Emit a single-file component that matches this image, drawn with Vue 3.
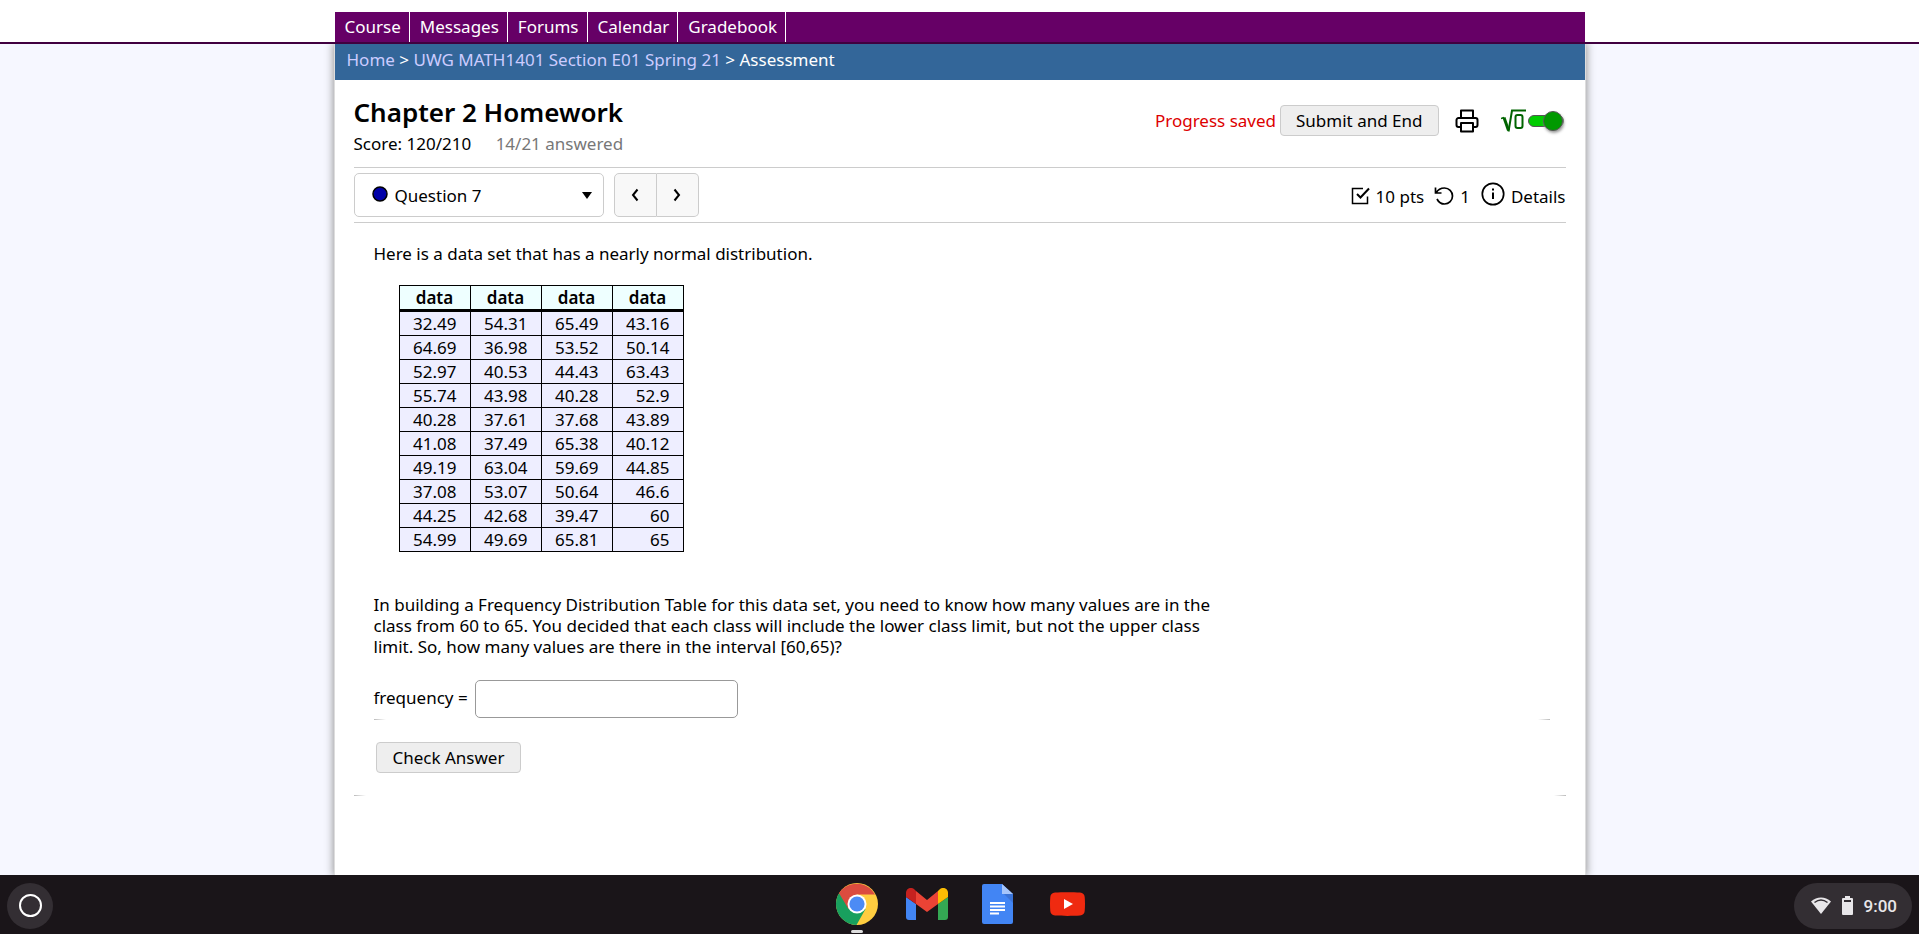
<template>
  <div class="screen">
    <header class="topbar">
      <nav class="nav">
        <a v-for="item in navItems" :key="item" href="#">{{ item }}</a>
      </nav>
    </header>

    <main class="wrapper">
      <div class="breadcrumb">
        <a href="#">Home</a> &gt; <a href="#">UWG MATH1401 Section E01 Spring 21</a> &gt; Assessment
      </div>

      <div class="content">
        <div class="assess-header">
          <div class="heading">
            <h1>Chapter 2 Homework</h1>
            <p>Score: 120/210 <span class="answered">14/21 answered</span></p>
          </div>
          <div class="actions">
            <span class="saved">Progress saved</span>
            <button type="button" class="btn">Submit and End</button>
            <button type="button" class="icon-btn" aria-label="Print">
              <svg width="24" height="24" viewBox="0 0 24 24" fill="none" stroke="#000" stroke-width="2" stroke-linejoin="round">
                <path d="M6 9V1.500h12V9M6 18H3.500a2 2 0 0 1-2-2v-5a2 2 0 0 1 2-2h17a2 2 0 0 1 2 2v5a2 2 0 0 1-2 2H18" />
                <path d="M6 14h12v8.500H6z" />
              </svg>
            </button>
            <label class="math-toggle">
              <svg width="25" height="24" viewBox="0 0 25 24" fill="none" stroke="#006400">
                <path d="M0 9.500l3-1" stroke-width="1.500" />
                <path d="M3 8.500l4.500 13" stroke-width="3" />
                <path d="M7.500 22.500L11 1.500h14" stroke-width="2" />
                <rect x="14.500" y="6" width="7" height="13" rx="2" stroke-width="2" />
              </svg>
              <input v-model="mathEntry" type="checkbox" aria-label="Equation editor" />
              <span class="switch"></span>
            </label>
          </div>
        </div>

        <div class="question-bar">
          <div class="picker">
            <svg class="dot" width="16" height="16" viewBox="0 0 16 16">
              <circle cx="8" cy="8" r="7" fill="#0000a8" stroke="#000" stroke-width="1.500" />
            </svg>
            <select v-model="question" aria-label="Question">
              <option v-for="n in 21" :key="n" :value="n">Question {{ n }}</option>
            </select>
            <svg class="caret" width="10" height="7" viewBox="0 0 10 7"><path d="M0 0h10L5 7z" /></svg>
          </div>
          <div class="pager">
            <button type="button" aria-label="Previous question" @click="question > 1 && question--">
              <svg width="8" height="14" viewBox="0 0 8 14"><path d="M6.500 1.500L2 7l4.500 5.500" /></svg>
            </button>
            <button type="button" aria-label="Next question" @click="question < 21 && question++">
              <svg width="8" height="14" viewBox="0 0 8 14"><path d="M1.500 1.500L6 7l-4.500 5.500" /></svg>
            </button>
          </div>
          <div class="info">
            <svg width="19" height="18" viewBox="0 0 19 18" fill="none" stroke="#000" stroke-width="2">
              <path d="M12 1.500H1.500v15h15V9.500" stroke-width="1.500" />
              <path d="M6 7l3.500 3.500L18 1.500" />
            </svg>
            <span>10 pts</span>
            <svg class="retry" width="20" height="18" viewBox="0 0 20 18" fill="none" stroke="#000" stroke-width="1.700">
              <path d="M1.500 0.500v5.500h6M2 6C4 2.500 7 1 10.500 1c4.500 0 8 3.500 8 8s-3.500 8-8 8c-3.500 0-6-2-7.500-5" />
            </svg>
            <span>1</span>
            <button type="button" class="details">
              <svg width="24" height="24" viewBox="0 0 24 24" fill="none" stroke="#000" stroke-width="1.700">
                <circle cx="12" cy="12" r="10.700" />
                <path d="M12 10.500V17M12 6.500v2" stroke-width="2" />
              </svg>
              <span>Details</span>
            </button>
          </div>
        </div>

        <div class="question">
          <p>Here is a data set that has a nearly normal distribution.</p>
          <table>
            <thead>
              <tr><th v-for="n in 4" :key="n" scope="col">data</th></tr>
            </thead>
            <tbody>
              <tr v-for="(row, i) in rows" :key="i">
                <td v-for="(value, j) in row" :key="j">{{ value }}</td>
              </tr>
            </tbody>
          </table>
          <p class="prompt">
            In building a Frequency Distribution Table for this data set, you need to know how many values are in the
            class from 60 to 65. You decided that each class will include the lower class limit, but not the upper class
            limit. So, how many values are there in the interval [60,65)?
          </p>
          <div class="answer">
            <label for="frequency">frequency =</label>
            <input id="frequency" v-model="answer" type="text" autocomplete="off" />
          </div>
          <div class="fade-line"></div>
          <button type="button" class="btn check">Check Answer</button>
        </div>
        <div class="fade-line"></div>
      </div>
    </main>

    <footer class="shelf">
      <button type="button" class="launcher" aria-label="Launcher"></button>
      <div class="apps">
        <button type="button" class="app active" aria-label="Chrome">
          <svg width="42" height="42" viewBox="0 0 42 42">
            <circle cx="21" cy="21" r="21" fill="#ffcd40" />
            <path d="M3 10.200A21 21 0 0 0 20.500 42L29.500 26 21 21z" fill="#18a05e" />
            <path d="M3 10.200A21 21 0 0 1 39 11.500H21L12.500 26z" fill="#db4c3f" />
            <circle cx="21" cy="21" r="9.500" fill="#fff" />
            <circle cx="21" cy="21" r="7.600" fill="#4c8bf5" />
          </svg>
        </button>
        <button type="button" class="app" aria-label="Gmail">
          <svg width="42" height="32" viewBox="0 0 42 32">
            <path d="M0 9l10 7v16H3a3 3 0 0 1-3-3z" fill="#4285f4" />
            <path d="M42 9l-10 7v16h7a3 3 0 0 0 3-3z" fill="#34a853" />
            <path d="M10 3l11 9 11-9v13l-11 8-11-8z" fill="#ea4335" />
            <path d="M0 9V5c0-4.500 5-6.500 8.500-3.500L10 3v13L0 9z" fill="#c5221f" />
            <path d="M42 9V5c0-4.500-5-6.500-8.500-3.500L32 3v13l10-7z" fill="#fbbc04" />
          </svg>
        </button>
        <button type="button" class="app" aria-label="Docs">
          <svg width="31" height="40" viewBox="0 0 31 40">
            <path d="M2 0h18l11 10v28a2 2 0 0 1-2 2H2a2 2 0 0 1-2-2V2a2 2 0 0 1 2-2z" fill="#4285f4" />
            <path d="M22 10h9v9z" fill="#3a73d6" />
            <path d="M20 0l11 10H20z" fill="#a6c5fa" />
            <path d="M8 19h15M8 22.500h15M8 26h15M8 29.500h9" stroke="#fff" stroke-width="2" />
          </svg>
        </button>
        <button type="button" class="app" aria-label="YouTube">
          <svg width="35" height="24" viewBox="0 0 35 24">
            <path d="M5 .5C12 0 23 0 30 .5c3 .3 4.500 2 4.700 4.500.4 5 .4 9 0 14-.2 2.500-1.700 4.200-4.700 4.500-7 .5-18 .5-25 0C2 23.200.5 21.500.3 19c-.4-5-.4-9 0-14C.5 2.500 2 .8 5 .5z" fill="#ef2a10" />
            <path d="M14 7l9 5-9 5z" fill="#fff" />
          </svg>
        </button>
      </div>
      <button type="button" class="tray">
        <svg width="20" height="17" viewBox="0 0 20 17">
          <path d="M0 4.500C6-.8 14-.8 20 4.500L10 17z" fill="#e8e6e9" />
          <path d="M3.500 5.500c4-3 9-3 13 0" fill="none" stroke="#332e33" stroke-width="1.500" />
        </svg>
        <svg width="11" height="19" viewBox="0 0 11 19">
          <path d="M3 0h5v2h2a1 1 0 0 1 1 1v15a1 1 0 0 1-1 1H1a1 1 0 0 1-1-1V3a1 1 0 0 1 1-1h2z" fill="#e8e6e9" />
          <path d="M2 4h7v2H2z" fill="#332e33" />
        </svg>
        <span>9:00</span>
      </button>
    </footer>
  </div>
</template>

<script setup>
import { ref } from 'vue'

const navItems = ['Course', 'Messages', 'Forums', 'Calendar', 'Gradebook']
const question = ref(7)
const answer = ref('')
const mathEntry = ref(true)

const rows = [
  ['32.49', '54.31', '65.49', '43.16'],
  ['64.69', '36.98', '53.52', '50.14'],
  ['52.97', '40.53', '44.43', '63.43'],
  ['55.74', '43.98', '40.28', '52.9'],
  ['40.28', '37.61', '37.68', '43.89'],
  ['41.08', '37.49', '65.38', '40.12'],
  ['49.19', '63.04', '59.69', '44.85'],
  ['37.08', '53.07', '50.64', '46.6'],
  ['44.25', '42.68', '39.47', '60'],
  ['54.99', '49.69', '65.81', '65'],
]
</script>

<style>
body { margin: 0; background: #f6f7ff; }
</style>

<style scoped>
.screen { min-height: 100vh; display: flex; flex-direction: column; overflow-x: clip; font-family: "Trebuchet MS", "Noto Sans", sans-serif; font-size: 17px; line-height: 21px; color: #000; }
.screen * { box-sizing: border-box; }
button, input, select { font: inherit; color: inherit; }
button { cursor: pointer; }
svg { display: block; flex: none; }
a { text-decoration: none; }
p { margin: 0; }

.topbar { background: #fff; padding-top: 12px; border-bottom: 2px solid #400040; position: relative; z-index: 1; }
.nav { display: flex; max-width: 1250px; height: 30px; margin: 0 auto; background: #606; }
.nav a { color: #fff; padding: 4px 8px 4px 10px; border-right: 1px solid #fff; }

.wrapper { flex: 1; width: 100%; max-width: 1252px; margin: 0 auto; background: #fff; border: solid #ddd; border-width: 0 1px; box-shadow: 0 0 8px 1px #999; }
.breadcrumb { background: #369; color: #fff; padding: 5px 12px 10px; }
.breadcrumb a { color: #ccf; }
.content { padding: 0 19px; }

.assess-header { display: flex; justify-content: space-between; padding: 16px 0 13px; border-bottom: 1px solid #ccc; }
h1 { margin: 0; font-size: 26px; line-height: 32px; font-weight: 600; }
.heading p { margin-top: 5px; }
.answered { color: #777; margin-left: 20px; }
.actions { display: flex; align-items: center; height: 31px; margin: 9px 2px 0 0; }
.saved { color: #d00; margin-right: 4px; }
.btn { height: 31px; padding: 0 15px; background: #eee; border: 1px solid #ccc; border-radius: 4px; }
.icon-btn { margin: 0 22px 0 16px; padding: 0; border: 0; background: none; }
.math-toggle { display: flex; align-items: center; gap: 2px; position: relative; cursor: pointer; }
.math-toggle input { position: absolute; inset: 0; opacity: 0; margin: 0; }
.switch { width: 36px; height: 12px; border: 1px solid #555; border-radius: 6px; background: #ccc; position: relative; }
.switch::after { content: ""; position: absolute; top: -5px; left: 0; width: 20px; height: 20px; border-radius: 50%; background: #777; border: 1px solid #555; box-sizing: border-box; box-shadow: 1px 2px 3px #999; }
input:checked + .switch { background: #0c0; }
input:checked + .switch::after { left: 14px; background: #090; }

.question-bar { display: flex; align-items: center; padding: 5px 0; border-bottom: 1px solid #ccc; }
.picker { position: relative; width: 250px; }
.picker select { display: block; appearance: none; width: 100%; height: 44px; padding: 0 40px; background: #fff; border: 1px solid #ccc; border-radius: 5px; }
.dot { position: absolute; left: 18px; top: 13px; pointer-events: none; }
.caret { position: absolute; right: 12px; top: 19px; pointer-events: none; }
.pager { display: flex; margin-left: 10px; }
.pager button { display: flex; align-items: center; justify-content: center; width: 43px; height: 44px; padding: 0; background: #f8f8f8; border: 1px solid #ccc; border-radius: 5px 0 0 5px; }
.pager button + button { width: 42px; border-left: 0; border-radius: 0 5px 5px 0; }
.pager path { fill: none; stroke: #000; stroke-width: 2; }
.info { display: flex; align-items: center; gap: 6px; margin-left: auto; padding-top: 2px; }
.retry { margin-left: 4px; }
.details { display: flex; align-items: center; gap: 6px; margin-left: 5px; padding: 0; border: 0; background: none; }
.details svg { margin-bottom: 4px; }

.question { padding: 20px 16px 0 20px; }
table { border-collapse: collapse; margin: 21px 0 42px 25px; }
th, td { width: 71px; border: 1px solid #000; line-height: 21px; padding: 1px 13px; }
th { background: #eff; border-bottom-width: 3px; text-align: center; font-weight: 600; }
td { background: #eef; text-align: right; }
.prompt { max-width: 868px; }
.answer { display: flex; align-items: center; gap: 7px; margin-top: 23px; }
.answer label { padding-bottom: 4px; }
.answer input { width: 263px; height: 38px; padding: 0 8px; border: 1px solid #999; border-radius: 5px; background: #fff; }
.fade-line { height: 1px; margin-top: 1px; background: linear-gradient(to right, #bbb, transparent 12px, transparent calc(100% - 12px), #bbb); }
.check { margin: 22px 0 21px 2px; padding: 0 16px; }

.shelf { position: sticky; bottom: 0; z-index: 2; display: grid; grid-template-columns: 1fr auto 1fr; align-items: center; height: 59px; padding: 0 7px; background: #1a1519; }
.shelf button { border: 0; }
.launcher { display: flex; align-items: center; justify-content: center; width: 46px; height: 46px; margin-top: 2px; padding: 0; border-radius: 50%; background: #332e33; }
.launcher::before { content: ""; width: 19px; height: 19px; border: 2px solid #fff; border-radius: 50%; }
.apps { display: flex; gap: 24px; padding-left: 5px; }
.app { display: flex; align-items: center; justify-content: center; position: relative; width: 46px; height: 59px; padding: 0 0 2px; background: none; }
.app.active::after { content: ""; position: absolute; bottom: 1px; left: 17px; width: 12px; height: 3px; border-radius: 2px; background: #ddd; }
.tray { display: flex; align-items: center; gap: 11px; justify-self: end; height: 46px; padding: 0 15px 0 17px; margin-top: 2px; border-radius: 23px; background: #332e33; color: #e8e6e9; font-family: Roboto, sans-serif; font-weight: 500; }
.tray span { padding-top: 2px; }
</style>
